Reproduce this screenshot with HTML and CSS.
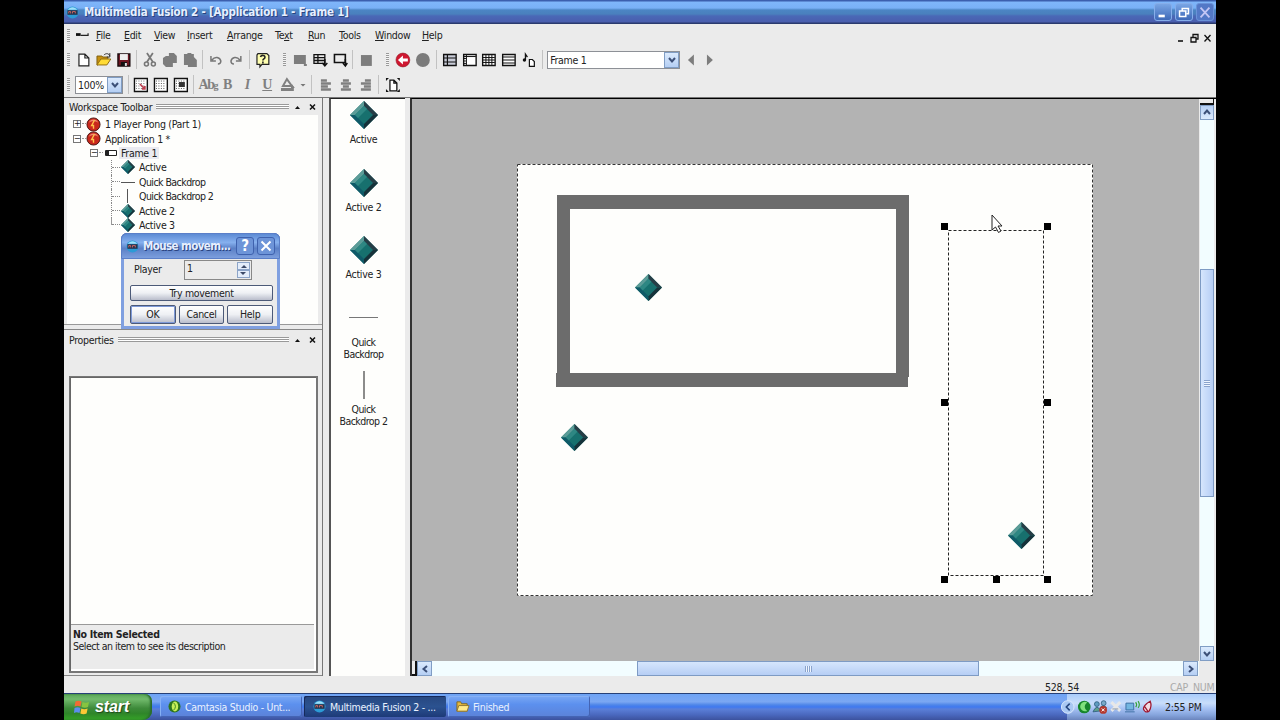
FILE: index.html
```
<!DOCTYPE html>
<html lang="en">
<head>
  <meta charset="UTF-8" />
  <title>Multimedia Fusion 2 - [Application 1 - Frame 1]</title>
  <link rel="stylesheet" href="styles.css">
</head>
<body>

  <svg class="symbols" width="0" height="0">
    <symbol id="diamond" viewBox="0 0 28 28">
      <path d="M14 0 28 14 14 28 0 14z" fill="#17706e"/>
      <path d="M14 0 0 14l5 0 9-9z" fill="#5c9c98"/>
      <path d="M14 0 28 14h-5l-9-9z" fill="#263d46"/>
      <path d="M0 14 14 28v-5L5 14z" fill="#0f5a68"/>
      <path d="M28 14 14 28v-5l9-9z" fill="#16323a"/>
      <path d="M14 5 5 14l3 3 9-9z" fill="#2e8783"/>
    </symbol>
    <symbol id="logo" viewBox="0 0 14 14">
      <circle cx="7" cy="7" r="6.500" fill="#2c9bd6"/>
      <path d="M2 4a6 6 0 0 1 10 0z" fill="#9fe0f8"/>
      <path d="M1.500 4.500h11v5h-11z" fill="#26344f"/>
      <path d="M3 8V6h2v2M7 8V6h3v2" stroke="#d06a62" fill="none"/>
    </symbol>
    <symbol id="app" viewBox="0 0 16 16">
      <circle cx="8" cy="8" r="7" fill="#c9281c" stroke="#4a1713"/>
      <path d="M3 6a5.500 5.500 0 0 1 10 0c-3-2-7-2-10 0z" fill="#f08a70"/>
      <path d="M9 3.500 6 9h2v3.500" stroke="#ffc24a" stroke-width="1.500" fill="none"/>
    </symbol>
    <symbol id="chev" viewBox="0 0 8 8">
      <path d="M1 2l3 3.500 3-3.500" stroke="#3c5078" stroke-width="2" fill="none"/>
    </symbol>
    <symbol id="spin" viewBox="0 0 8 5"><path d="M1 4l3-3 3 3z" fill="#3c4a68"/></symbol>
  </svg>

  <div class="window">
    <header class="titlebar">
      <svg class="logo"><use href="#logo"/></svg>
      <h1>Multimedia Fusion 2 - [Application 1 - Frame 1]</h1>
      <div class="winbtns">
        <span><svg viewBox="0 0 18 18"><path d="M4 13.500h7" stroke="#fff" stroke-width="3"/></svg></span>
        <span><svg viewBox="0 0 18 18"><path d="M7 7V5h7v6h-2M4 8h7v6H4z" stroke="#fff" stroke-width="1.700" fill="none"/></svg></span>
        <span class="close"><svg viewBox="0 0 18 18"><path d="M4 4l10 11M14 4L4 15" stroke="#c3c6f4" stroke-width="2"/></svg></span>
      </div>
    </header>

    <nav class="menu">
      <i class="grip"></i>
      <svg class="menuicon" viewBox="0 0 14 6"><path d="M0 1h5v3H0z" fill="#111"/><path d="M5 3.500h8V1" stroke="#222" stroke-width="1.300" fill="none"/></svg>
      <span class="m1"><u>F</u>ile</span>
      <span class="m2"><u>E</u>dit</span>
      <span class="m3"><u>V</u>iew</span>
      <span class="m4"><u>I</u>nsert</span>
      <span class="m5"><u>A</u>rrange</span>
      <span class="m6">Te<u>x</u>t</span>
      <span class="m7"><u>R</u>un</span>
      <span class="m8"><u>T</u>ools</span>
      <span class="m9"><u>W</u>indow</span>
      <span class="m10"><u>H</u>elp</span>
      <svg class="mdibtns" viewBox="0 0 34 10">
        <path d="M1 8h5" stroke="#111" stroke-width="1.600"/>
        <path d="M16 4V1.500h5V6h-2M14 4.500h5V9h-5z" stroke="#111" stroke-width="1.300" fill="none"/>
        <path d="M27.500 2l6 6.500M33.500 2l-6 6.500" stroke="#111" stroke-width="1.300"/>
      </svg>
    </nav>

    <div class="toolbar">
      <i class="grip"></i>
      <svg class="ic" viewBox="0 0 20 20"><path d="M5 4h6l4 4v8H5zM11 4v4h4" fill="#fff" stroke="#222" stroke-width="1.200"/></svg>
      <svg class="ic" viewBox="0 0 20 20"><path d="M3 6h5l1 1h5v3H7l-3 5H3z" fill="#c69010" stroke="#806010"/><path d="M3 15l4-6h10l-4 6z" fill="#ffdb35" stroke="#947012"/><path d="M10 5c2-2 5-2 6 1M16 3v4h-3" stroke="#333" fill="none"/></svg>
      <svg class="ic" viewBox="0 0 20 20"><path d="M4 4h12v12H4z" fill="#6d1520" stroke="#1a0a0c" stroke-width="1.400"/><path d="M6 4h8v6H6z" fill="#eee"/><path d="M7 12h6v4H7z" fill="#111"/><path d="M11 13h2v3h-2z" fill="#ddd"/></svg>
      <i class="sep"></i>
      <svg class="ic" viewBox="0 0 20 20"><path d="M7 3l6 9M13 3l-6 9" stroke="#777" stroke-width="1.800"/><circle cx="6.500" cy="14" r="2" fill="none" stroke="#777" stroke-width="1.600"/><circle cx="13.500" cy="14" r="2" fill="none" stroke="#777" stroke-width="1.600"/></svg>
      <svg class="ic" viewBox="0 0 20 20"><path d="M9 3h5l3 3v7h-4v4H6l-3-3V8l3-2h3z" fill="#7d7d7d"/></svg>
      <svg class="ic" viewBox="0 0 20 20"><path d="M4 4h3l1-1h3l1 1h2v3l3 3v7H8v-2H4z" fill="#7d7d7d"/></svg>
      <i class="sep"></i>
      <svg class="ic" viewBox="0 0 20 20"><path d="M6 10c3-4 8-3 9 1 0 2-1 3-3 3M5 6v5h5" stroke="#777" stroke-width="1.500" fill="none"/></svg>
      <svg class="ic" viewBox="0 0 20 20"><path d="M14 10c-3-4-8-3-9 1 0 2 1 3 3 3M15 6v5h-5" stroke="#777" stroke-width="1.500" fill="none"/></svg>
      <i class="sep"></i>
      <svg class="ic" viewBox="0 0 20 20"><path d="M5 3.500h9l2 2v9H9l-2 2.500v-2.500H4V5z" fill="#ffffb0" stroke="#222" stroke-width="1.200"/><path d="M7.500 7c1-2.500 5-2 4.500.5-.2 1.500-2 1.500-2 3M10 11.500v2" stroke="#222" stroke-width="1.600" fill="none"/></svg>
      <i class="grip g2"></i>
      <svg class="ic" viewBox="0 0 20 20"><path d="M4 5h12v9h1v2h-3v-2H4z" fill="#7d7d7d"/></svg>
      <svg class="ic" viewBox="0 0 20 20"><path d="M4 4.500h11v9H4zM4 7.500h11M4 10.500h11M8 4.500v9" fill="none" stroke="#111" stroke-width="1.300"/><path d="M15 9v7M12.500 13l2.500 3 2.500-3" stroke="#111" stroke-width="1.400" fill="none"/></svg>
      <svg class="ic" viewBox="0 0 20 20"><path d="M4.500 4.500h11v8h-11z" fill="none" stroke="#111" stroke-width="1.600"/><path d="M15.500 9v7M13 13l2.500 3 2-3" stroke="#111" stroke-width="1.500" fill="none"/></svg>
      <i class="sep"></i>
      <svg class="ic" viewBox="0 0 20 20"><path d="M5 5h11v11H5z" fill="#7d7d7d"/></svg>
      <i class="grip g2"></i>
      <svg class="ic" viewBox="0 0 20 20"><circle cx="10" cy="10" r="7" fill="#cf1730" stroke="#8e1622" stroke-width=".6"/><path d="M5 10l5-4.500v3h5v3h-5v3z" fill="#fff"/></svg>
      <svg class="ic" viewBox="0 0 20 20"><circle cx="10" cy="10" r="7" fill="#7b7b7b"/></svg>
      <i class="sep"></i>
      <svg class="ic" viewBox="0 0 20 20"><path d="M3.700 4.500h12.600v11H3.700z" fill="#c9ccd8" stroke="#111" stroke-width="1.400"/><path d="M4 8h12M4 12h12M7.500 5v10" stroke="#111" stroke-width="1.200"/></svg>
      <svg class="ic" viewBox="0 0 20 20"><path d="M3.700 4.500h12.600v11H3.700z" fill="#fff" stroke="#111" stroke-width="1.400"/><path d="M4 6.500h12M6.500 5v10M4 8.500h2M4 11h2M4 13.500h2" stroke="#111"/></svg>
      <svg class="ic" viewBox="0 0 20 20"><path d="M3.700 4.500h12.600v11H3.700z" fill="#fff" stroke="#111" stroke-width="1.400"/><path d="M4 7.500h12M4 10h12M4 12.500h12M7 5v10M10 5v10M13 5v10" stroke="#111"/></svg>
      <svg class="ic" viewBox="0 0 20 20"><path d="M3.700 4.500h12.600v11H3.700z" fill="#fff" stroke="#111" stroke-width="1.400"/><path d="M4 7h12M4 10h12M4 13h12" stroke="#111" stroke-width="1.100"/></svg>
      <svg class="ic" viewBox="0 0 20 20"><path d="M6.500 10V4l2 3" stroke="#111" stroke-width="1.300" fill="none"/><circle cx="5.500" cy="10" r="1.700" fill="#111"/><path d="M10.500 9.500h3l2 2v5h-5z" stroke="#111" stroke-width="1.200" fill="#fff"/></svg>
      <i class="sep"></i>
      <div class="combo frames"><span>Frame 1</span><b><svg><use href="#chev"/></svg></b></div>
      <svg class="ic" viewBox="0 0 20 20"><path d="M13 4.500v11L7 10z" fill="#7d7d7d"/></svg>
      <svg class="ic" viewBox="0 0 20 20"><path d="M7 4.500v11L13 10z" fill="#7d7d7d"/></svg>
    </div>

    <div class="toolbar second">
      <i class="grip"></i>
      <div class="combo percent"><span>100%</span><b><svg><use href="#chev"/></svg></b></div>
      <i class="sep"></i>
      <svg class="ic" viewBox="0 0 20 20"><path d="M3.500 3.500h13v13h-13z" fill="#fff" stroke="#111" stroke-width="1.400"/><path d="M5 6h10M5 8.500h10M5 11h10M5 13.500h10" stroke="#777" stroke-dasharray="1 1.500"/><path d="M9 9l5 5M14 11v3h-3" stroke="#bc4050" stroke-width="1.700" fill="none"/></svg>
      <svg class="ic" viewBox="0 0 20 20"><path d="M3.500 3.500h13v13h-13z" fill="#fff" stroke="#111" stroke-width="1.400"/><path d="M5 6h10M5 8.500h10M5 11h10M5 13.500h10" stroke="#555" stroke-dasharray="1 1.500"/></svg>
      <svg class="ic" viewBox="0 0 20 20"><path d="M3.500 3.500h13v13h-13z" fill="#fff" stroke="#111" stroke-width="1.400"/><path d="M5 6h10M5 8.500h10M5 11h10M5 13.500h10" stroke="#555" stroke-dasharray="1 1.500"/><path d="M8 7h6v5H8z" fill="#333"/></svg>
      <i class="sep wide"></i>
      <span class="ic font">Ab<small>g</small></span>
      <span class="ic letter">B</span>
      <span class="ic letter it">I</span>
      <span class="ic letter un">U</span>
      <svg class="ic fill" viewBox="0 0 20 20"><path d="M9 4l5 7H5z" fill="none" stroke="#808080" stroke-width="2"/><path d="M3 13h13v3H3zM14 9l3 4h-4z" fill="#808080"/></svg>
      <svg class="drop" viewBox="0 0 8 8"><path d="M1.500 3h5L4 5.500z" fill="#777"/></svg>
      <i class="sep"></i>
      <svg class="ic al" viewBox="0 0 12 12"><path d="M1 1.500h6M1 4.500h10M1 7.500h7M1 10.500h10" stroke="#808080" stroke-width="2.300"/></svg>
      <svg class="ic al" viewBox="0 0 12 12"><path d="M3 1.500h6M1 4.500h10M3 7.500h6M1 10.500h10" stroke="#808080" stroke-width="2.300"/></svg>
      <svg class="ic al" viewBox="0 0 12 12"><path d="M5 1.500h6M1 4.500h10M4 7.500h7M1 10.500h10" stroke="#808080" stroke-width="2.300"/></svg>
      <i class="sep"></i>
      <svg class="ic fit" viewBox="0 0 20 20"><path d="M7 5h4l3 3v8H7zM11 5v3h3" stroke="#111" stroke-width="1.300" fill="#fff"/><path d="M3 3h3L3 6zM17 3h-3l3 3zM3 17h3l-3-3zM17 17h-3l3-3z" fill="#111"/></svg>
    </div>

    <main class="main">
      <aside class="side">
        <section class="workspace">
          <div class="panelhead"><span>Workspace Toolbar</span><i class="lines"></i><svg viewBox="0 0 22 8"><path d="M1 6l2.500-3L6 6z" fill="#111"/><path d="M16 1.500l5 5M21 1.500l-5 5" stroke="#111" stroke-width="1.500"/></svg></div>
          <div class="tree">
            <div class="row root"><i class="box">+</i><svg class="appicon"><use href="#app"/></svg><span>1 Player Pong (Part 1)</span></div>
            <div class="row root"><i class="box">−</i><svg class="appicon"><use href="#app"/></svg><span>Application 1 *</span></div>
            <div class="row frame"><i class="box">−</i><svg class="frameicon" viewBox="0 0 12 6"><path d="M.5.5h11v5H.5z" fill="#fff" stroke="#222"/><path d="M1 1h3v4H1z" fill="#222"/></svg><span class="sel">Frame 1</span></div>
            <div class="row leaf"><svg class="obj"><use href="#diamond"/></svg><span>Active</span></div>
            <div class="row leaf"><svg class="obj" viewBox="0 0 14 14"><path d="M0 7.500h14" stroke="#555"/></svg><span class="tight">Quick Backdrop</span></div>
            <div class="row leaf"><svg class="obj" viewBox="0 0 14 14"><path d="M6.500 0v14" stroke="#555"/></svg><span class="tight">Quick Backdrop 2</span></div>
            <div class="row leaf"><svg class="obj"><use href="#diamond"/></svg><span>Active 2</span></div>
            <div class="row leaf last"><svg class="obj"><use href="#diamond"/></svg><span>Active 3</span></div>
          </div>
        </section>
        <section class="properties">
          <div class="panelhead"><span>Properties</span><i class="lines"></i><svg viewBox="0 0 22 8"><path d="M1 6l2.500-3L6 6z" fill="#111"/><path d="M16 1.500l5 5M21 1.500l-5 5" stroke="#111" stroke-width="1.500"/></svg></div>
          <div class="propbox">
            <div class="proplist"></div>
            <div class="desc"><strong>No Item Selected</strong><p>Select an item to see its description</p></div>
          </div>
        </section>
      </aside>

      <section class="objects">
        <div class="item"><svg><use href="#diamond"/></svg><span>Active</span></div>
        <div class="item"><svg><use href="#diamond"/></svg><span>Active 2</span></div>
        <div class="item"><svg><use href="#diamond"/></svg><span>Active 3</span></div>
        <div class="item"><svg viewBox="0 0 28 28"><path d="M-1 13.500h29" stroke="#777"/></svg><span class="tight">Quick<br>Backdrop</span></div>
        <div class="item"><svg viewBox="0 0 28 28"><path d="M14 0v28" stroke="#666" stroke-width="1.500"/></svg><span class="tight">Quick<br>Backdrop 2</span></div>
      </section>

      <section class="editor">
        <div class="canvas">
          <div class="playfield">
            <svg class="outline" width="576" height="432"><rect x=".5" y=".5" width="575" height="431"/></svg>
            <div class="pong"></div>
            <div class="wall"></div>
            <svg class="ball b1"><use href="#diamond"/></svg>
            <svg class="ball b2"><use href="#diamond"/></svg>
            <svg class="ball b3"><use href="#diamond"/></svg>
            <svg class="zone" width="110" height="362" viewBox="0 0 110 362">
              <rect x="7.500" y="7.500" width="95" height="345" fill="none" stroke="#222" stroke-dasharray="3 2"/>
              <path d="M0 0h7v7H0zM103 0h7v7h-7zM0 176h7v7H0zM103 176h7v7h-7zM0 353h7v7H0zM52 353h7v7h-7zM103 353h7v7h-7z" fill="#000"/>
            </svg>
            <svg class="cursor" width="12" height="20" viewBox="0 0 12 20"><path d="M1 1v15l3.500-3 3 5.500 2.500-1.500-3-5h4z" fill="#fff" stroke="#222"/></svg>
          </div>
        </div>
        <div class="vscroll">
          <i class="split"></i>
          <b class="flip"><svg><use href="#chev"/></svg></b>
          <i class="thumb"></i>
          <b><svg><use href="#chev"/></svg></b>
        </div>
        <div class="hscroll">
          <i class="split"></i>
          <b class="left"><svg><use href="#chev"/></svg></b>
          <i class="thumb"></i>
          <b class="right"><svg><use href="#chev"/></svg></b>
        </div>
      </section>

      <div class="dialog">
        <div class="dlghead"><svg class="logo"><use href="#logo"/></svg><h2>Mouse movem...</h2>
          <b>?</b><b><svg viewBox="0 0 14 14"><path d="M2.500 2.500l9 9M11.500 2.500l-9 9" stroke="#fff" stroke-width="2"/></svg></b>
        </div>
        <div class="dlgbody">
          <div class="player"><label>Player</label><div class="num"><span>1</span><div><i><svg><use href="#spin"/></svg></i><i class="flip"><svg><use href="#spin"/></svg></i></div></div></div>
          <button class="try">Try movement</button>
          <div class="btns"><button class="ok">OK</button><button>Cancel</button><button>Help</button></div>
        </div>
      </div>
    </main>

    <div class="status"><span class="pos">528, 54</span><span class="cap">CAP</span><span class="numlock">NUM</span></div>

    <footer class="taskbar">
      <div class="start">
        <svg viewBox="0 0 16 16"><path d="M1.500 2.500c2-1 4-1 6 0l-1 5c-2-1-4-1-6 0z" fill="#f26a33"/><path d="M8.500 3c2 1 4 1 6.500 0l-1 5c-2 1-4 1-6.500 0z" fill="#86c440"/><path d="M.5 9c2-1 4-1 6 0l-1 5c-2-1-4-1-5.500 0z" fill="#5c8df0"/><path d="M7.300 9.500c2 1 4 1 6.300 0l-1 5c-2 1-4 1-6.300 0z" fill="#fbc835"/></svg>
        <span>start</span>
      </div>
      <div class="task t1"><svg viewBox="0 0 14 14"><circle cx="7" cy="7" r="6.500" fill="#2c7420"/><ellipse cx="7.500" cy="7" rx="3.500" ry="5.500" fill="#c6ee58"/><path d="M6 3q4 4 0 8" stroke="#37801d" fill="none"/></svg><span>Camtasia Studio - Unt...</span></div>
      <div class="task on"><svg><use href="#logo"/></svg><span>Multimedia Fusion 2 - ...</span></div>
      <div class="task t3"><svg viewBox="0 0 14 14"><path d="M1 2h4l1 2h6v8H1z" fill="#e6b93c" stroke="#7a6425"/><path d="M1 12l2-6h11l-2 6z" fill="#ffe98a" stroke="#8e7430"/></svg><span>Finished</span></div>
      <div class="tray">
        <svg class="icons" viewBox="0 0 100 16">
          <circle cx="8" cy="8" r="6.500" fill="#a9c8f3" stroke="#dbe9fc"/><path d="M10 4.500L6.500 8l3.500 3.500" stroke="#25467f" stroke-width="1.600" fill="none"/>
          <circle cx="25" cy="8" r="6.500" fill="#16852c"/><path d="M28 3a5 5 0 1 0 0 9q-5-4 0-9z" fill="#7fe07c"/>
          <circle cx="38" cy="5" r="2.500" fill="#5f9cc0" stroke="#28577a" stroke-width=".8"/><circle cx="45" cy="4" r="2.500" fill="#79a9c8" stroke="#28577a" stroke-width=".8"/><path d="M34 13q4-9 8-1zM41 9q4-5 7 0z" fill="#5fa08c" stroke="#28577a" stroke-width=".8"/><circle cx="44.500" cy="11" r="4" fill="#b3382e"/><path d="M43 9.500l3 3M46 9.500l-3 3" stroke="#fff"/>
          <path d="M53 3l9 9M62 3l-9 9" stroke="#e8e8e8" stroke-width="3"/><path d="M54 10h6" stroke="#8e9caa"/>
          <path d="M68 4h8v7h-8zM67 13h10" fill="#73b6e0" stroke="#3e6fa4"/><path d="M78 3q2 3 0 5M80.500 2q2.500 4 0 7" stroke="#35a33a" stroke-width="1.200" fill="none"/>
          <path d="M93 2q-7 4-7 8 2 5 6 2 3-5 1-10zM87 7l4 6" fill="#f3dce2" stroke="#9e1730" stroke-width="1.300"/>
        </svg>
        <span>2:55 PM</span>
      </div>
    </footer>
  </div>

</body>
</html>
```
FILE: styles.css
```
* {
  box-sizing: border-box;
}

body {
  margin: 0;
  background: #000;
  font-family: "DejaVu Sans Condensed", "DejaVu Sans", sans-serif;
  font-stretch: condensed;
  font-size: 10.5px;
  letter-spacing: -0.3px;
  color: #222;
  overflow: hidden;
}

.symbols {
  position: absolute;
}

i {
  font-style: normal;
}

svg {
  flex: none;
  overflow: visible;
}

.window {
  display: flex;
  flex-direction: column;
  width: 1152px;
  height: 720px;
  margin: 0 auto;
  background: #ebebeb;
}

/* title bar */
.titlebar {
  display: flex;
  align-items: center;
  height: 24px;
  padding: 0 2px 0 2px;
  background: linear-gradient(#3c5fae 0, #3c5fae 1px, #7fb6fa 2px, #79b0f6 8px, #4c85c4 10px, #4a80bd 14px, #4a68b6 16px, #4a5eae 22px, #2a3a6e 23px);
}

.logo {
  width: 13px;
  height: 13px;
}

h1,
h2 {
  margin: 0;
  font-family: "DejaVu Sans Condensed", "DejaVu Sans", sans-serif;
  font-size: 11.5px;
  font-weight: bold;
  color: #e6efff;
  text-shadow: 1px 1px #2a4380;
  white-space: nowrap;
}

h1 {
  flex: 1;
  margin-left: 5px;
  letter-spacing: -0.2px;
}

.winbtns {
  display: flex;
  gap: 3px;
}

.winbtns span {
  width: 18px;
  height: 18px;
  border: 1px solid #86aeea;
  border-radius: 3px;
  background: linear-gradient(#79a5e4, #3e69b8);
}

.winbtns svg {
  display: block;
  width: 16px;
  height: 16px;
}

.winbtns .close {
  background: #5378c6;
  border-color: #6a92d8;
}

/* menu */
.menu {
  display: flex;
  align-items: center;
  height: 23px;
  padding: 0 5px 1px 3px;
}

.menu span {
  width: 40px;
  white-space: nowrap;
}

.menu .menuicon {
  width: 13px;
  height: 6px;
  margin: 0 7px 0 2px;
}

.menu .m1 { width: 28px; }
.menu .m2 { width: 30px; }
.menu .m3 { width: 33px; }
.menu .m4 { width: 40px; }
.menu .m5 { width: 48px; }
.menu .m6 { width: 33px; }
.menu .m7 { width: 31px; }
.menu .m8 { width: 36px; }
.menu .m9 { width: 47px; }

.mdibtns {
  width: 34px;
  height: 10px;
  margin: 5px 0 0 auto;
}

.grip {
  flex: none;
  width: 3px;
  height: 13px;
  margin: 0 4px 0 0;
  background: repeating-linear-gradient(#999 0, #999 1px, #f4f4f4 1px, #f4f4f4 2px);
}

/* toolbars */
.toolbar {
  display: flex;
  align-items: center;
  height: 25px;
  padding-left: 3px;
}

.ic {
  flex: none;
  width: 20px;
  height: 20px;
}

.toolbar .ic {
  width: 19.8px;
}

.sep {
  flex: none;
  width: 1px;
  height: 19px;
  margin: 0 2.9px;
  background: #c2c2c2;
}

.grip.g2 {
  margin: 0 4.5px 0 10px;
}

.combo {
  display: flex;
  justify-content: space-between;
  height: 18px;
  border: 1px solid #8d9096;
  background: #fff;
  line-height: 16px;
}

.combo span {
  padding-left: 2px;
}

.combo b,
.vscroll b,
.hscroll b {
  display: flex;
  align-items: center;
  justify-content: center;
  flex: none;
  width: 15px;
  border: 1px solid #809dc4;
  background: linear-gradient(#dbeafd, #b5cff4);
}

.combo b svg,
.vscroll b svg,
.hscroll b svg {
  width: 8px;
  height: 8px;
}

.frames {
  width: 133px;
  margin: 0 0.5px 0 1.5px;
}

.percent {
  width: 48px;
  margin: 0 2px 0 1px;
}

.second .sep {
  margin: 0 2.5px;
}

.second .wide {
  margin-right: 4px;
}

.letter,
.font {
  text-align: center;
  font: bold 14px/20px "Liberation Serif", serif;
  color: #808080;
}

.it {
  font-style: italic;
}

.un {
  text-decoration: underline;
}

.font {
  letter-spacing: -1.5px;
}

.font small {
  font-size: 10px;
}

.toolbar .fill {
  margin-left: 1px;
}

.drop {
  width: 8px;
  height: 8px;
  margin: 0 2px 0 1px;
}

.toolbar .al {
  height: 12px;
}

.second .drop + .sep {
  margin-right: 4px;
}

.toolbar .fit {
  margin-left: 1px;
}

/* main area */
.main {
  position: relative;
  display: flex;
  height: 579px;
  border-top: 1px solid #777;
}

.side {
  display: flex;
  flex-direction: column;
  width: 259px;
  border-right: 1px solid #777;
}

.workspace {
  height: 227px;
  padding: 0 4px 0 3px;
  border-bottom: 1px solid #999;
}

.panelhead {
  display: flex;
  align-items: center;
  height: 17px;
  padding-left: 2px;
  white-space: nowrap;
}

.panelhead .lines {
  flex: 1;
  height: 5px;
  margin: 0 5px 0 4px;
  border: solid #999;
  border-width: 1px 0;
  background: linear-gradient(#fff 0 1px, #999 1px 2px, #fff 2px);
}

.panelhead svg {
  width: 22px;
  height: 8px;
  margin-right: 2px;
}

.tree {
  height: 209px;
  padding-top: 2px;
  background: #fefefc;
}

.row {
  display: flex;
  align-items: center;
  height: 14.4px;
  white-space: nowrap;
}

.box {
  flex: none;
  width: 8px;
  height: 8px;
  border: 1px solid #777;
  background: #fff;
  font-size: 9px;
  line-height: 5px;
  text-align: center;
  letter-spacing: 0;
}

.box::after {
  content: "";
  display: block;
  width: 4px;
  margin: -3px 0 0 8px;
  border-top: 1px dotted #999;
}

.root {
  padding-left: 6px;
}

.appicon {
  width: 15px;
  height: 15px;
  margin: 0 4px 0 5px;
}

.frame {
  padding-left: 23px;
}

.frameicon {
  width: 12px;
  height: 6px;
  margin: 0 2px 0 7px;
}

.sel {
  padding: 0 2px;
  background: #eaeaf0;
}

.leaf {
  margin-left: 44px;
  border-left: 1px dotted #888;
}

.leaf::before {
  content: "";
  width: 8px;
  border-top: 1px dotted #888;
}

.leaf.last {
  border-image: linear-gradient(#999 50%, transparent 50%) 1;
}

.tight {
  letter-spacing: -0.55px;
}

.obj {
  width: 14px;
  height: 14px;
  margin: 0 4px 0 1px;
}

.properties {
  flex: 1;
  margin-top: 4px;
  padding: 0 4px 0 3px;
  border-top: 1px solid #888;
  border-bottom: 1px solid #888;
}

.properties .panelhead {
  height: 19px;
}

.propbox {
  display: flex;
  flex-direction: column;
  height: 297px;
  margin: 27px 0 0 2px;
  padding: 1px 2px 2px 1px;
  border: 1px solid #777;
  border-width: 1px 2px 2px 1px;
  box-shadow: inset 1px 1px #666;
  background: #fff;
}

.proplist {
  height: 247px;
  border-bottom: 1px solid #999;
  background: #fefefc;
}

.desc {
  flex: 1;
  padding: 3px 2px;
  background: #ebebeb;
  line-height: 12px;
}

.desc strong {
  display: block;
}

.desc p {
  margin: 0;
  letter-spacing: -0.48px;
}

.objects {
  width: 76px;
  margin-left: 6px;
  padding: 2px 9px 0 0;
  border-top: 1px solid #222;
  border-left: 2px solid #555;
  background: #fefefc;
}

.item {
  display: flex;
  flex-direction: column;
  align-items: center;
  height: 67.5px;
  text-align: center;
  line-height: 12px;
}

.item svg {
  width: 28px;
  height: 28px;
  margin: 0 0 4px 1px;
}

.item span {
  white-space: nowrap;
}

/* frame editor */
.editor {
  display: grid;
  grid-template-columns: 1fr 17px;
  grid-template-rows: 562px 1fr;
  flex: 1;
  margin-left: 5px;
  border-top: 1px solid #000;
  border-left: 2px solid #333;
}

.canvas {
  padding: 65px 0 0 105px;
  background: #b3b3b3;
}

.playfield {
  position: relative;
  width: 576px;
  height: 432px;
  background: #fefefc;
}

.playfield > * {
  position: absolute;
}

.outline {
  left: 0;
  top: 0;
  fill: none;
  stroke: #333;
  stroke-dasharray: 3 2;
}

.pong {
  left: 40px;
  top: 31px;
  width: 352px;
  height: 182px;
  border: solid #6c6c6c;
  border-width: 14px 13px 4px;
}

.wall {
  left: 39px;
  top: 209px;
  width: 352px;
  height: 14px;
  background: #6c6c6c;
}

.ball {
  width: 27px;
  height: 27px;
}

.b1 { left: 118px; top: 110px; }
.b2 { left: 44px; top: 260px; }
.b3 { left: 491px; top: 358px; }

.zone {
  left: 424px;
  top: 59px;
}

.cursor {
  left: 474px;
  top: 50px;
}

.vscroll,
.hscroll {
  display: flex;
  background: #f2fdff;
}

.vscroll {
  flex-direction: column;
  border: solid #ebebeb;
  border-width: 0 2px 0 1px;
}

.vscroll b {
  width: 14px;
  height: 15px;
}

.vscroll .split {
  height: 6px;
  border: solid #111;
  border-width: 0 1px 2px 0;
  background: #ebebeb;
}

.thumb {
  border: 1px solid #7e9bc4;
  background: #c5dafa;
}

.vscroll .thumb {
  width: 14px;
  height: 228px;
  margin: 149px 0;
  background: repeating-linear-gradient(#8aa3cc 0 1px, #eef5ff 1px 2px) center / 6px 7px no-repeat, linear-gradient(90deg, #d6e6fd, #b6cef5);
}

.hscroll .thumb {
  width: 342px;
  margin: 0 204px 0 205px;
  background: repeating-linear-gradient(90deg, #8aa3cc 0 1px, #eef5ff 1px 2px) center / 7px 6px no-repeat, linear-gradient(#d6e6fd, #b6cef5);
}

.hscroll {
  height: 15px;
}

.hscroll .split {
  width: 5px;
  border: solid #111;
  border-width: 0 2px 2px 0;
  background: #ebebeb;
}

.flip { transform: rotate(180deg); }
.left svg { transform: rotate(90deg); }
.right svg { transform: rotate(-90deg); }

/* movement dialog, floats over the side panels */
.dialog {
  position: absolute;
  left: 57px;
  top: 135px;
  width: 159px;
  height: 96px;
  padding: 0 3px 3px;
  border-radius: 6px 6px 0 0;
  background: #7f9fe0;
  box-shadow: inset 0 1px #3e60a8;
}

.dlghead {
  display: flex;
  align-items: center;
  gap: 3px;
  height: 26px;
  margin: 0 -3px;
  padding: 0 4px;
  border: 1px solid #5b7fc8;
  border-radius: 6px 6px 0 0;
  background: linear-gradient(#5d8bd4, #86b0ee 35%, #5b80c6 60%, #7c9edd);
}

.dlghead h2 {
  flex: 1;
  margin-left: 1px;
  letter-spacing: -0.6px;
}

.dlghead b {
  flex: none;
  width: 18px;
  height: 18px;
  border: 1px solid #3f62ae;
  border-radius: 3px;
  background: #6d94d8;
  color: #fff;
  font-size: 15px;
  line-height: 16px;
  text-align: center;
}

.dlghead b svg {
  display: block;
  width: 14px;
  height: 14px;
  margin: 1px;
}

.dlgbody {
  height: 67px;
  padding: 1px 4px 0 6px;
  background: #ebebeb;
}

.player {
  display: flex;
  align-items: center;
  justify-content: space-between;
  height: 20px;
  padding-left: 4px;
}

.player label {
  margin-top: -2px;
}

.num {
  display: flex;
  justify-content: space-between;
  width: 68px;
  height: 20px;
  margin-right: 21px;
  padding: 1px 1px 1px 2px;
  border: 1px solid #888;
}

.num i {
  display: flex;
  align-items: center;
  justify-content: center;
  width: 13px;
  height: 8px;
  border: 1px solid #8ca4c8;
  background: #e4edfa;
}

.num svg {
  width: 8px;
  height: 5px;
}

button {
  padding: 0;
  border: 1px solid #4c5a78;
  border-radius: 2px;
  background: linear-gradient(#fff, #eef0f4 50%, #b9bdcb);
  color: #222;
  font: inherit;
  letter-spacing: inherit;
  line-height: 13px;
}

.try {
  display: block;
  width: 143px;
  height: 16px;
  margin-top: 5px;
}

.btns {
  display: flex;
  gap: 3px;
  width: 143px;
  margin-top: 4px;
}

.btns button {
  flex: 1;
  height: 19px;
}

.ok {
  box-shadow: inset 0 0 0 1px #7e9ad8;
}

/* status line */
.status {
  display: flex;
  align-items: center;
  height: 17px;
  padding-top: 4px;
}

.pos {
  width: 125px;
  margin-left: 981px;
  white-space: nowrap;
}

.cap,
.numlock {
  color: #aaa;
}

.cap {
  width: 23px;
}

/* taskbar */
.taskbar {
  display: flex;
  height: 27px;
  border-top: 1px solid #264077;
  background: linear-gradient(#6ea3f5, #7ba7f2 30%, #4f86e8 42%, #3f78f0 50%, #5b7fd8 58%, #4a68be 80%, #3c529e);
}

.start {
  display: flex;
  align-items: center;
  width: 88px;
  padding-left: 10px;
  border-radius: 0 7px 9px 0;
  background: linear-gradient(#5aa858, #71ba6c 20%, #3d8a3a 55%, #2f8629 75%, #35a427);
  box-shadow: inset -2px 0 2px #2a6a30;
}

.start svg {
  width: 16px;
  height: 16px;
}

.start span {
  margin-left: 5px;
  color: #fff;
  font: italic bold 16px/20px "Liberation Sans", sans-serif;
  letter-spacing: -0.1px;
  text-shadow: 1px 1px 1px #1d4a1a;
}

.task {
  display: flex;
  align-items: center;
  width: 142px;
  height: 21px;
  margin: 2px 0 0 2px;
  padding-left: 8px;
  border-radius: 2px;
  background: linear-gradient(#7aa8f4, #5c90ee 40%, #5c82d8);
  box-shadow: inset -1px -1px #4464b4, inset 1px 1px #86b0f4;
  color: #eaf2ff;
  white-space: nowrap;
}

.t1 {
  margin-left: 8px;
}

.task svg {
  width: 13px;
  height: 13px;
  margin-right: 4px;
}

.task.on {
  padding-left: 9px;
  background: linear-gradient(#27477f, #2b5290 50%, #1d3a78);
  box-shadow: inset 1px 1px #15295a;
}

.tray {
  display: flex;
  align-items: center;
  width: 149px;
  margin-left: auto;
  background: linear-gradient(#a9ccfb, #c9defb 35%, #a8c3f4 55%, #86a5dd 80%, #6b85bd);
}

.tray .icons {
  width: 97px;
  height: 16px;
  margin-left: -7px;
}

.tray span {
  margin-left: 8px;
  letter-spacing: -0.2px;
  white-space: nowrap;
}
```
